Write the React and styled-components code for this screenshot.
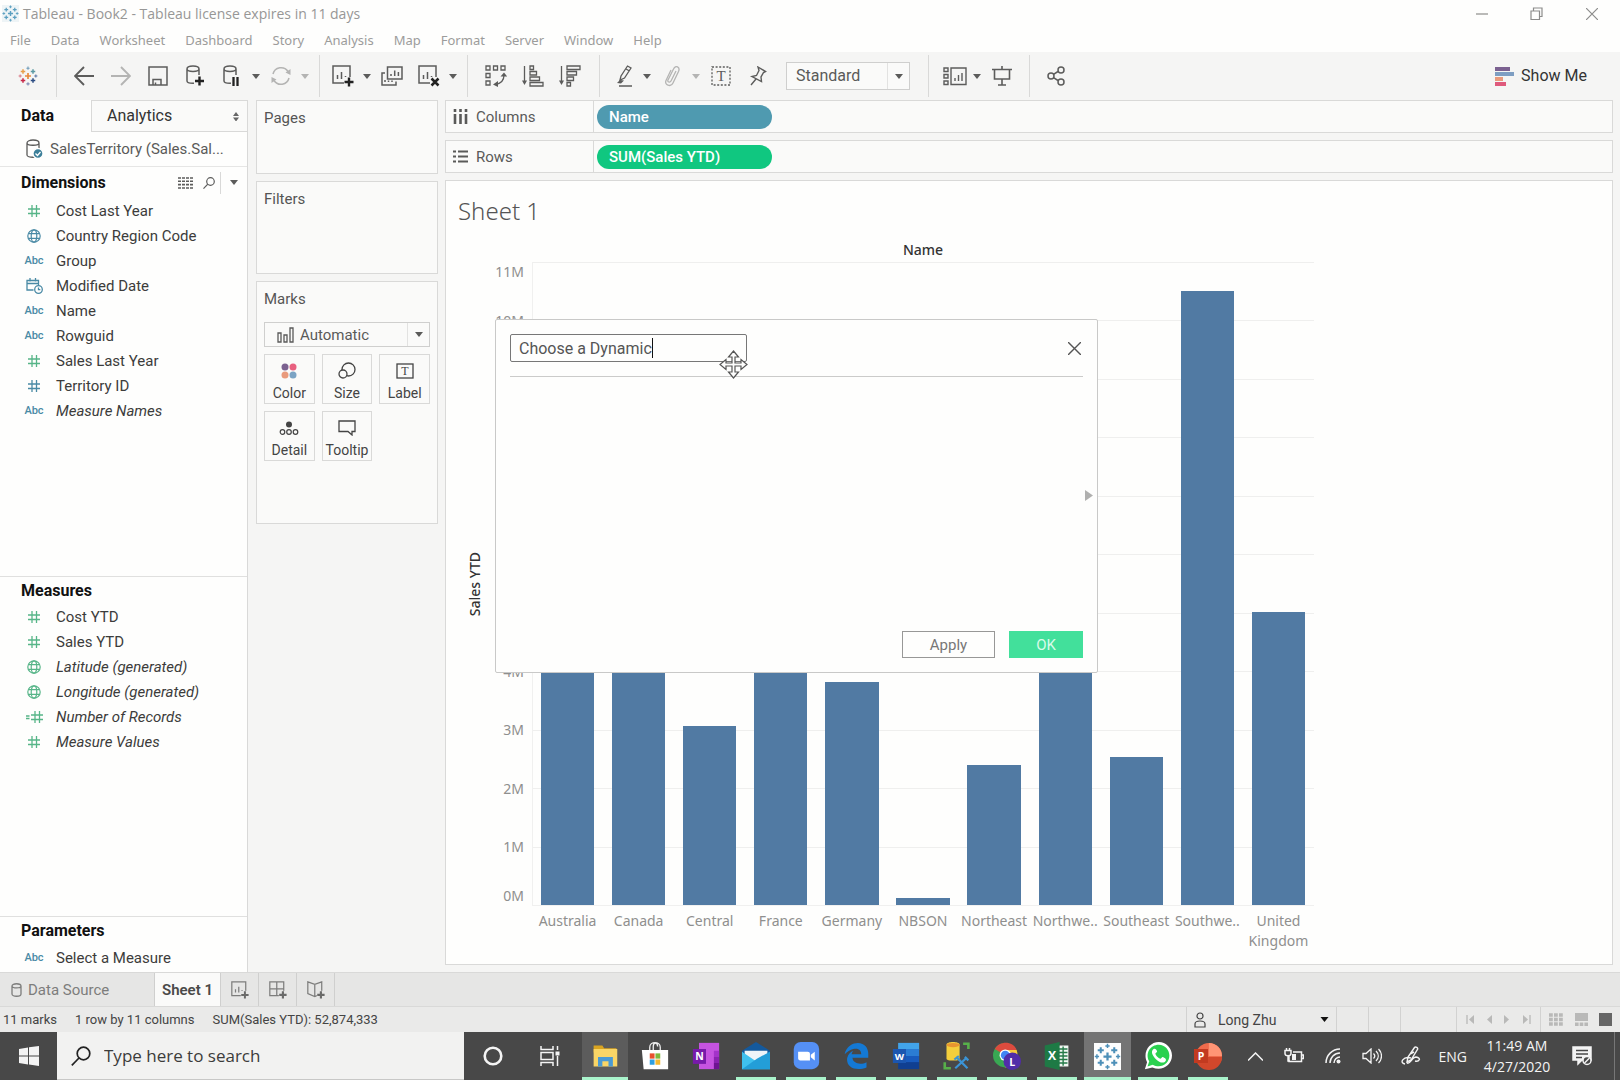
import React from "react";
import styled, { createGlobalStyle, css } from "styled-components";

const ui = `Roboto, "Liberation Sans", sans-serif`;
const wide = `"Noto Sans", "Open Sans", sans-serif`;
const line = "#d9d9d8";

const GlobalStyle = createGlobalStyle`
  *, *::before, *::after { box-sizing: border-box; }
  body { margin: 0; font-family: ${ui}; font-size: 15px; line-height: 20px; color: #333; background: #f5f5f4; }
  h1, h2, h3, ul, p { margin: 0; padding: 0; font-weight: 400; }
  ul { list-style: none; }
  button, input, select { font: inherit; color: inherit; margin: 0; }
  svg { display: block; flex: none; }
`;

const App_ = styled.div`
  display: flex;
  flex-direction: column;
  min-height: 100vh;
`;

const plainButton = css`
  border: 0;
  padding: 0;
  background: none;
  cursor: pointer;
`;

/* ---------- title and menu ---------- */
const TitleBar = styled.header`
  display: flex;
  align-items: center;
  height: 28px;
  padding: 0 20px 1px 2px;
  background: #fefefd;
  color: #979796;
`;
const Title = styled.h1`
  flex: 1;
  padding-left: 4px;
  font: 14px/20px "Open Sans", ${wide};
`;
const WindowButtons = styled.div`
  display: flex;
  gap: 38px;
`;
const WindowButton = styled.button`
  ${plainButton}
  display: grid;
  place-items: center;
  width: 17px;
  height: 17px;
  color: #8c8c8b;
`;
const MenuBar = styled.nav`
  display: flex;
  gap: 20px;
  height: 24px;
  padding: 0 10px;
  background: #fefefd;
`;
const MenuItem = styled.button`
  ${plainButton}
  color: #9c9c9b;
  font: 13px/20px ${wide};
`;

/* ---------- toolbar ---------- */
const Toolbar = styled.div`
  display: flex;
  align-items: center;
  height: 48px;
  background: #f5f5f4;
`;
const ToolGroup = styled.div`
  display: flex;
  align-items: center;
  height: 42px;
  padding: 0 ${(p) => p.$right ?? 8}px 0 ${(p) => p.$left ?? 8}px;
  border-right: ${(p) => (p.$last ? "0" : `1px solid ${line}`)};
`;
const Tool = styled.button`
  ${plainButton}
  display: grid;
  place-items: center;
  width: ${(p) => (p.$narrow ? 32 : 37)}px;
  height: 32px;
  color: ${(p) => (p.$dim ? "#b4b4b3" : "#5c5c5b")};
`;
const DropArrow = styled.button`
  ${plainButton}
  display: grid;
  place-items: center;
  width: 12px;
  height: 32px;
  color: ${(p) => (p.$dim ? "#b4b4b3" : "#5c5c5b")};
`;
const SelectBox = styled.label`
  display: flex;
  align-items: center;
  height: ${(p) => p.$height}px;
  width: ${(p) => p.$width};
  margin-left: ${(p) => (p.$spaced ? 10 : 0)}px;
  border: 1px solid #cfcfce;
  background: #fafaf9;
  color: #5a5a59;
`;
const SelectInput = styled.select`
  flex: 1;
  min-width: 0;
  height: 100%;
  padding: 0 ${(p) => (p.$size > 15 ? 9 : 5)}px;
  border: 0;
  appearance: none;
  background: none;
  font-size: ${(p) => p.$size}px;
`;
const SelectArrow = styled.span`
  display: grid;
  place-items: center;
  width: 22px;
  height: 100%;
  border-left: 1px solid #e2e2e1;
  pointer-events: none;
`;
const ShowMe = styled.button`
  ${plainButton}
  display: flex;
  align-items: center;
  gap: 7px;
  margin-left: auto;
  padding-right: 33px;
  font-size: 16px;
`;

/* ---------- work area ---------- */
const Work = styled.main`
  display: flex;
  flex: 1;
  min-height: 0;
`;
const Sidebar = styled.aside`
  display: flex;
  flex-direction: column;
  width: 248px;
  flex: none;
  border-right: 1px solid ${line};
  background: #fefefd;
`;
const SideTabs = styled.div`
  display: flex;
  height: 32px;
`;
const SideTab = styled.button`
  ${plainButton}
  display: flex;
  align-items: center;
  justify-content: space-between;
  flex: ${(p) => (p.$active ? "0 0 91px" : 1)};
  padding: 0 8px 0 ${(p) => (p.$active ? 21 : 15)}px;
  border: solid ${line};
  border-width: ${(p) => (p.$active ? "0" : "1px 0 1px 1px")};
  background: ${(p) => (p.$active ? "#fefefd" : "#fafaf9")};
  color: ${(p) => (p.$active ? "#111" : "#333")};
  font-size: 16px;
  font-weight: ${(p) => (p.$active ? 700 : 400)};
`;
const DataSourceRow = styled.div`
  display: flex;
  align-items: center;
  gap: 6px;
  height: 35px;
  padding-left: 26px;
  border-bottom: 1px solid #e6e6e5;
  color: #5a5a59;
`;
const FieldSection = styled.section`
  flex: ${(p) => p.$grow ?? "none"};
  min-height: 0;
  padding-bottom: 2px;
  border-top: ${(p) => (p.$ruled ? "1px solid #e0e0df" : "0")};
`;
const SectionHead = styled.div`
  display: flex;
  align-items: center;
  height: ${(p) => (p.$tall ? 31 : 28)}px;
  padding: 0 0 0 21px;
`;
const SectionTitle = styled.h2`
  flex: 1;
  color: #111;
  font-size: 16px;
  font-weight: 700;
`;
const HeadButton = styled.button`
  ${plainButton}
  display: grid;
  place-items: center;
  width: ${(p) => (p.$wide ? 27 : 23)}px;
  height: 22px;
  border-left: ${(p) => (p.$wide ? `1px solid ${line}` : "0")};
  color: #5c5c5b;
`;
const Field = styled.li`
  display: grid;
  grid-template-columns: 22px 1fr;
  align-items: center;
  column-gap: 11px;
  height: 25px;
  padding-left: 23px;
  color: #3c3c3b;
  font-style: ${(p) => (p.$italic ? "italic" : "normal")};
`;
const FieldMark = styled.span`
  display: grid;
  place-items: center;
  color: ${(p) => (p.$measure ? "#57b588" : "#4a8aa5")};
  font: 500 11px/14px ${ui};
`;

const Cards = styled.div`
  display: flex;
  flex-direction: column;
  gap: 7px;
  width: 182px;
  flex: none;
  margin-left: 8px;
`;
const Card = styled.section`
  height: ${(p) => p.$height}px;
  padding: 7px 7px;
  border: 1px solid ${line};
  background: #fafaf9;
`;
const CardTitle = styled.h2`
  color: #555;
  font-size: 15px;
`;
const MarksBody = styled.div`
  display: flex;
  flex-direction: column;
  gap: 7px;
  padding-top: 13px;
`;
const MarkGrid = styled.div`
  display: grid;
  grid-template-columns: repeat(3, 1fr);
  gap: 7px;
`;
const MarkButton = styled.button`
  ${plainButton}
  display: flex;
  flex-direction: column;
  align-items: center;
  justify-content: flex-end;
  gap: 4px;
  height: 50px;
  border: 1px solid ${line};
  color: #444;
  font-size: 14px;
`;

const Canvas = styled.div`
  display: flex;
  flex-direction: column;
  flex: 1;
  min-width: 0;
  gap: 7px;
  padding: 0 7px;
  padding-bottom: 7px;
`;
const Shelf = styled.section`
  display: flex;
  align-items: center;
  height: 33px;
  border: 1px solid ${line};
  background: #fafaf9;
`;
const ShelfTitle = styled.h2`
  display: flex;
  align-items: center;
  gap: 8px;
  width: 148px;
  height: 100%;
  padding-left: 7px;
  border-right: 1px solid ${line};
  color: #5a5a59;
  font-size: 15px;
`;
const Pill = styled.button`
  ${plainButton}
  width: 175px;
  height: 24px;
  margin-left: 3px;
  padding: 0 12px;
  border-radius: 12px;
  background: ${(p) => (p.$measure ? "#10c780" : "#4f9ab0")};
  color: #fff;
  font-size: 15px;
  font-weight: 500;
  text-align: left;
`;
const Sheet = styled.section`
  position: relative;
  flex: 1;
  padding: 14px 12px 0;
  border: 1px solid ${line};
  background: #fefefd;
`;
const SheetTitle = styled.h2`
  color: #555;
  font: 300 24px/32px ${wide};
`;
const Chart = styled.div`
  display: grid;
  grid-template-columns: 34px 32px 8px 782px;
  grid-template-rows: 35px 644px auto;
  color: #8f8f8e;
  font: 14px/20px ${wide};
`;
const ChartHead = styled.h3`
  grid-area: 1 / 4;
  align-self: center;
  padding-top: 10px;
  color: #333;
  font-size: 14px;
  font-weight: 500;
  text-align: center;
`;
const AxisTitle = styled.div`
  grid-area: 2 / 1;
  place-self: center;
  writing-mode: vertical-rl;
  transform: rotate(180deg);
  color: #333;
  font-weight: 500;
`;
const AxisLabels = styled.div`
  grid-area: 2 / 2;
  display: grid;
  grid-template-rows: 1fr repeat(10, 2fr) 1fr;
  align-items: center;
  text-align: right;
  & > :first-child { align-self: start; }
  & > :last-child { align-self: end; }
`;
const Lines = styled.div`
  grid-area: 2 / 4;
  display: grid;
  grid-template-rows: repeat(11, 1fr);
  border: solid #f0f0ef;
  border-width: 0 0 1px 1px;
`;
const Line = styled.div`
  border-top: 1px solid #efefee;
`;
const Bars = styled.div`
  grid-area: 2 / 4;
  display: grid;
  grid-template-columns: repeat(11, 1fr);
  align-items: end;
  padding-bottom: 1px;
`;
const Bar = styled.div`
  justify-self: center;
  width: 75%;
  background: #517aa3;
`;
const BarLabels = styled.div`
  grid-area: 3 / 4;
  display: grid;
  grid-template-columns: repeat(11, 1fr);
  padding-top: 5px;
  text-align: center;
`;
const BarLabel = styled.span`
  display: flex;
  justify-content: center;
`;

/* ---------- floating editor ---------- */
const Dialog = styled.div`
  position: absolute;
  left: 49px;
  top: 138px;
  display: flex;
  flex-direction: column;
  width: 603px;
  height: 354px;
  padding: 14px;
  border: 1px solid #c9c9c8;
  border-radius: 2px;
  background: #fefefd;
`;
const DialogHead = styled.div`
  display: flex;
  align-items: center;
  justify-content: space-between;
  padding-bottom: 14px;
  border-bottom: 1px solid #cbcbca;
`;
const NameBox = styled.label`
  display: flex;
  align-items: center;
  width: 237px;
  height: 28px;
  padding-left: 8px;
  border: 1px solid #777;
  border-radius: 2px;
`;
const NameInput = styled.input`
  field-sizing: content;
  padding: 1px 0 0;
  border: 0;
  outline: 0;
  background: none;
  color: #555;
  font-size: 16px;
`;
const TextCaret = styled.span`
  width: 1px;
  height: 20px;
  background: #111;
`;
const Expand = styled.button`
  ${plainButton}
  flex: 1;
  align-self: flex-end;
  margin-right: -10px;
  padding-bottom: 18px;
  color: #b0b0af;
`;
const DialogFoot = styled.div`
  display: flex;
  justify-content: flex-end;
  gap: 14px;
`;
const DialogButton = styled.button`
  ${plainButton}
  width: ${(p) => (p.$primary ? 74 : 93)}px;
  height: 27px;
  border: 1px solid ${(p) => (p.$primary ? "#42e09b" : "#989897")};
  background: ${(p) => (p.$primary ? "#42e09b" : "transparent")};
  color: ${(p) => (p.$primary ? "#d9fbea" : "#777")};
  font-size: 15px;
`;
const MovePointer = styled.div`
  position: absolute;
  left: 223px;
  top: 30px;
`;

/* ---------- sheet tabs and status ---------- */
const TabStrip = styled.nav`
  display: flex;
  height: 35px;
  border-top: 1px solid ${line};
  border-bottom: 1px solid ${line};
  background: #e6e6e5;
`;
const SheetTab = styled.button`
  ${plainButton}
  display: flex;
  align-items: center;
  justify-content: ${(p) => (p.$source ? "flex-start" : "center")};
  gap: 6px;
  width: ${(p) => (p.$source ? 155 : p.$active ? 66 : 38)}px;
  padding-left: ${(p) => (p.$source ? 11 : 0)}px;
  border-right: 1px solid #cfcfce;
  background: ${(p) => (p.$active ? "#fafaf9" : "none")};
  color: ${(p) => (p.$active ? "#4a4a49" : "#7d7d7c")};
  font-weight: ${(p) => (p.$active ? 600 : 400)};
`;
const StatusBar = styled.footer`
  display: flex;
  align-items: center;
  gap: 18px;
  height: 25px;
  padding-left: 3px;
  background: #eaeae9;
  color: #444;
  font-size: 13px;
`;
const StatusRight = styled.div`
  display: flex;
  align-items: stretch;
  height: 25px;
  margin-left: auto;
`;
const StatusCell = styled.div`
  display: flex;
  align-items: center;
  justify-content: space-between;
  width: ${(p) => p.$width}px;
  padding: 0 ${(p) => p.$pad ?? 0}px;
  border-left: 1px solid #d2d2d1;
`;
const UserButton = styled.button`
  ${plainButton}
  display: flex;
  align-items: center;
  flex: 1;
  gap: 12px;
  color: #444;
  font-size: 14px;
  & > :last-child { margin-left: auto; color: #111; }
`;
const TinyButton = styled.button`
  ${plainButton}
  color: ${(p) => (p.$active ? "#666" : "#b9b9b8")};
`;

/* ---------- taskbar ---------- */
const Taskbar = styled.footer`
  display: flex;
  height: 48px;
  background: #484848;
  color: #f4f4f4;
`;
const StartButton = styled.button`
  ${plainButton}
  display: grid;
  place-items: center;
  width: 57px;
  color: #f4f4f4;
`;
const Search = styled.label`
  display: flex;
  align-items: center;
  gap: 13px;
  width: 407px;
  padding-left: 14px;
  border-bottom: 1px solid #c8c8c7;
  background: #f2f2f1;
  color: #222;
`;
const SearchInput = styled.input`
  flex: 1;
  min-width: 0;
  padding: 0;
  border: 0;
  outline: 0;
  background: none;
  font: 17px/24px "Open Sans", ${wide};
  &::placeholder { color: #3c3c3b; opacity: 1; }
`;
const TaskButton = styled.button`
  ${plainButton}
  display: grid;
  place-items: center;
  width: 57px;
  color: #f4f4f4;
`;
const Apps = styled.div`
  display: grid;
  grid-template-columns: repeat(13, 1fr);
  width: 653px;
  margin-left: 2px;
`;
const AppButton = styled.button`
  ${plainButton}
  display: grid;
  place-items: center;
  margin: 0 ${(p) => (p.$lit ? 2 : 5)}px;
  padding-top: 3px;
  border-bottom: 3px solid ${(p) => (p.$open ? "#a9f3cb" : "transparent")};
  background: ${(p) => (p.$lit === 2 ? "#747474" : p.$lit ? "#5c5c5c" : "none")};
  background-clip: padding-box;
`;
const Tray = styled.div`
  display: flex;
  align-items: center;
  flex: 1;
  justify-content: space-between;
  padding: 0 5px 0 11px;
  font: 14px/21px "Open Sans", ${wide};
`;
const TrayButton = styled.button`
  ${plainButton}
  display: grid;
  place-items: center;
  min-width: ${(p) => (p.$wide ? 30 : 22)}px;
  height: 44px;
  color: #f4f4f4;
  text-align: center;
`;
const DesktopEdge = styled.span`
  width: 1px;
  height: 48px;
  background: #777;
`;

/* ---------- icons ---------- */
const Svg = ({ w = 22, h, box, children, ...rest }) => (
  <svg width={w} height={h ?? w} viewBox={box ?? `0 0 ${w} ${h ?? w}`} fill="none" stroke="currentColor" strokeWidth="1.5" aria-hidden="true" {...rest}>
    {children}
  </svg>
);
const Down = ({ w = 8 }) => (
  <Svg w={w} h={5} box="0 0 8 5"><path d="M0 0h8L4 5z" fill="currentColor" stroke="none" /></Svg>
);
const plus = (x, y, r) => `M${x - r} ${y}h${2 * r}M${x} ${y - r}v${2 * r}`;
const Sparkle = ({ w = 20, mono, paper }) => {
  const c = (v) => mono ?? v;
  return (
    <Svg w={w} box="0 0 24 24" strokeWidth="1.8">
      {paper && <path d="M0 0h24v24H0z" fill={paper} stroke="none" />}
      <path d={plus(12, 12, 3.6)} stroke={c("#e8893c")} strokeWidth="2" />
      <path d={plus(6, 6.5, 2.7)} stroke={c("#e8a04c")} />
      <path d={plus(18, 6.5, 2.7)} stroke={c("#5d9aa3")} />
      <path d={plus(6, 17.5, 2.7)} stroke={c("#c72a4a")} />
      <path d={plus(18, 17.5, 2.7)} stroke={c("#2c4c82")} />
      <path d={plus(12, 2.6, 1.9)} stroke={c("#6f9bb8")} strokeWidth="1.3" />
      <path d={plus(12, 21.4, 1.9)} stroke={c("#7f8cb5")} strokeWidth="1.3" />
      <path d={plus(2.6, 12, 1.9)} stroke={c("#d97a86")} strokeWidth="1.3" />
      <path d={plus(21.4, 12, 1.9)} stroke={c("#5b79a8")} strokeWidth="1.3" />
    </Svg>
  );
};
const Arrow = ({ flip }) => (
  <Svg w={20} strokeWidth="1.9"><path d={flip ? "M0 10h19M10 1l9 9-9 9" : "M20 10H1M10 1l-9 9 9 9"} /></Svg>
);
const Save = () => (
  <Svg w={20} strokeWidth="1.5"><path d="M1 1h18v18H1zM5 19v-5.500h8V19M7.500 16.500v2" /></Svg>
);
const cylinder = "M3 4c0-4 12-4 12 0v12c0 3-12 3-12 0zM3 4c0 3.200 12 3.200 12 0";
const AddSource = () => (
  <Svg w={22}><path d={cylinder} /><path d="M10 10h12v12H10z" fill="#f5f5f4" stroke="none" /><path d={plus(15.5, 16, 4.5)} stroke="#222" strokeWidth="2.4" /></Svg>
);
const PauseSource = () => (
  <Svg w={22}><path d={cylinder} /><path d="M10 10h12v12H10z" fill="#f5f5f4" stroke="none" /><path d="M12.500 12v9M16.500 12v9" stroke="#222" strokeWidth="2.300" /></Svg>
);
const Refresh = () => (
  <Svg w={20}><path d="M2 8a8.300 8.300 0 0 1 15-2.500M18 12a8.300 8.300 0 0 1-15 2.500" /><path d="M19.500 3v6l-5-2.500zM.500 17v-6l5 2.500z" fill="currentColor" stroke="none" /></Svg>
);
const bars = "M5.500 14v-4M9.500 14V7M13.500 14v-3";
const NewSheet = ({ bold = "#222", w = 22, bg = "#f5f5f4" }) => (
  <Svg w={w} box="0 0 22 22"><path d="M1 1h17v17H1z" /><path d={bars} /><path d="M12 12h10v10H12z" fill={bg} stroke="none" /><path d={plus(17, 17, 4.5)} stroke={bold} strokeWidth="2.4" /></Svg>
);
const Duplicate = () => (
  <Svg w={22} h={20}><path d="M6.500 1H21v12H6.500zM10 10V8M13.700 10V4.500M17.400 10V6M4 7H1v12h14v-3.500M4 16v-2M7.500 16v-1.500M11 16v-1.500" /></Svg>
);
const ClearSheet = () => (
  <Svg w={22}><path d="M1 1h17v17H1z" /><path d={bars} /><path d="M12 12h10v10H12z" fill="#f5f5f4" stroke="none" /><path d="M13.500 13.500l7 7M20.500 13.500l-7 7" stroke="#222" strokeWidth="2.500" /></Svg>
);
const Swap = () => (
  <Svg w={22}><path d="M1 1h4v4H1zM8.500 1h4v4h-4zM16 1h4v4h-4zM1 8.500h4v4H1zM1 16h4v4H1zM19 10c0 5-3 8.500-8.500 9.500" strokeWidth="1.300" /><path d="M15.500 11.500l3.500-4 3.300 4zM13 16l-5 3.500 5 2.500z" fill="currentColor" stroke="none" /></Svg>
);
const SortRows = ({ desc }) => (
  <Svg w={22} strokeWidth="1.300"><path d="M2.500 1v17" /><path d="M0 15.500h5L2.500 20z" fill="currentColor" stroke="none" />
    {desc ? <path d="M8 1h13v3.500H8zM8 6.500h9.500V10H8zM8 12h6.500v3.500H8zM8 17.500h3.500V21H8z" /> : <path d="M8 1h3.500v3.500H8zM8 6.500h6.500V10H8zM8 12h9.500v3.500H8zM8 17.500h13V21H8z" />}
  </Svg>
);
const Pen = () => (
  <Svg w={18} h={22} strokeWidth="1.300"><path d="M4 15l1-4L11.500 1l3.500 2L8.500 13zM10 4l3.500 2M3 21h13" /><path d="M4 15l-3 3 4 .500 3-3z" fill="currentColor" stroke="none" /></Svg>
);
const Clip = () => (
  <Svg w={16} h={22} strokeWidth="1.3"><path d="M12 6L7 16c-1 2-4 1-3-1L9.500 4c2-4.500 7-2 5 2.500L9 18c-2 4.500-9 2-7-2.500L7 5" /></Svg>
);
const TextTool = ({ dashed }) => (
  <Svg w={dashed ? 20 : 18} h={dashed ? 20 : 16} strokeWidth="1.3">
    <rect x="1" y="1" width={dashed ? 18 : 16} height={dashed ? 18 : 14} strokeDasharray={dashed ? "2 1.600" : undefined} />
    <text x={dashed ? 10 : 9} y={dashed ? 15 : 12} textAnchor="middle" fontFamily="Liberation Serif, serif" fontSize={dashed ? 15 : 12} fill="currentColor" stroke="none">T</text>
  </Svg>
);
const Pin = () => (
  <Svg w={18} h={20} strokeWidth="1.4"><path d="M9 1l7.500 4.500-2 1-2.500 4.500.500 4.500L3 10.500l4.500-1L10 4.500zM7 13l-5 6" /></Svg>
);
const Cards_ = () => (
  <Svg w={24} h={19}><path d="M1 1h4v3.500H1zM1 7.500h4V11H1zM1 14h4v3.500H1zM8 1h15v16.500H8zM12 14v-3M15.500 14V8M19 14V6" strokeWidth="1.400" /></Svg>
);
const Present = () => (
  <Svg w={20}><path d="M0 3.500h20M2.500 4v9h15V4M10 13v6M6 19h8M10 0v3" strokeWidth="1.6" /></Svg>
);
const Share = () => (
  <Svg w={19} h={20}><circle cx="4" cy="10" r="3" /><circle cx="14" cy="4" r="3" /><circle cx="14" cy="16" r="3" /><path d="M6.500 8.300l4.500-2.800M6.500 11.700l4.500 2.800" /></Svg>
);
const Hash = () => (
  <Svg w={12} strokeWidth="1.3"><path d="M4 0v12M8.500 0v12M0 4h12M0 8.500h12" /></Svg>
);
const CalcHash = () => (
  <Svg w={17} h={12} strokeWidth="1.300"><path d="M9 0v12M13.500 0v12M5 4h12M5 8.500h12M0 5h3.500M0 7.500h3.500" /></Svg>
);
const Globe = () => (
  <Svg w={14} strokeWidth="1.2"><circle cx="7" cy="7" r="6.200" /><ellipse cx="7" cy="7" rx="2.800" ry="6.200" /><path d="M1.500 4.700h11M1.500 9.300h11" /></Svg>
);
const DateTime = () => (
  <Svg w={17} h={16} strokeWidth="1.300"><path d="M7.500 12H1V2.500h11.500V7M1 5.500h11.500M4 0v3.500M9.500 0v3.500" /><circle cx="12.500" cy="11.500" r="3.800" /><path d="M12.500 9.500v2.200h1.800" /></Svg>
);
const Lens = ({ w = 12 }) => (
  <Svg w={w} box="0 0 20 20" strokeWidth={w > 15 ? 1.7 : 2}><circle cx="12.500" cy="7.500" r="6.300" /><path d="M8 12L.800 19.300" /></Svg>
);

const kinds = {
  num: <Hash />,
  calc: <CalcHash />,
  geo: <Globe />,
  date: <DateTime />,
  text: "Abc",
};
const FieldRow = ({ kind, measure, italic, children }) => (
  <Field $italic={italic}>
    <FieldMark $measure={measure}>{kinds[kind]}</FieldMark>
    {children}
  </Field>
);

const dimensions = [
  ["num", "Cost Last Year", true],
  ["geo", "Country Region Code"],
  ["text", "Group"],
  ["date", "Modified Date"],
  ["text", "Name"],
  ["text", "Rowguid"],
  ["num", "Sales Last Year", true],
  ["num", "Territory ID"],
  ["text", "Measure Names", false, true],
];
const measures = [
  ["num", "Cost YTD"],
  ["num", "Sales YTD"],
  ["geo", "Latitude (generated)", true],
  ["geo", "Longitude (generated)", true],
  ["calc", "Number of Records", true],
  ["num", "Measure Values", true],
];
const sales = [
  ["Australia", 5.98],
  ["Canada", 6.77],
  ["Central", 3.07],
  ["France", 4.77],
  ["Germany", 3.81],
  ["NBSON", 0.12],
  ["Northeast", 2.4],
  ["Northwe..", 7.89],
  ["Southeast", 2.53],
  ["Southwe..", 10.51],
  ["United Kingdom", 5.01],
];
const menus = ["File", "Data", "Worksheet", "Dashboard", "Story", "Analysis", "Map", "Format", "Server", "Window", "Help"];

/* taskbar program icons, all on a 32 unit square */
const Program = ({ children }) => (
  <svg width="28" height="28" viewBox="0 0 32 32" aria-hidden="true">{children}</svg>
);
const Letter = ({ x, y, s = 12, children }) => (
  <text x={x} y={y} fontSize={s} fontWeight="700" fontFamily="Open Sans, sans-serif" fill="#fff" textAnchor="middle">{children}</text>
);
const programs = [
  ["File Explorer", true, 1, <Program key="i"><path d="M3 4h10l2 3h14v5H3z" fill="#d9a421" /><path d="M3 8h27v20H3z" fill="#f9d566" /><path d="M8 28V17h17v11h-5v-6h-7v6z" fill="#4a9ad4" /></Program>],
  ["Microsoft Store", false, 0, <Program key="i"><path d="M10 10V6c0-7 12-7 12 0v4M14 10V5c0-5 5-5 5 0" fill="none" stroke="#eee" strokeWidth="1.500" /><path d="M1 9h30v22H3z" fill="#fff" /><path d="M10 13h5.500v6H10z" fill="#e8502e" /><path d="M16.500 13H22v6h-5.500z" fill="#80b83c" /><path d="M10 20h5.500v6H10z" fill="#2f9fe0" /><path d="M16.500 20H22v6h-5.500z" fill="#f5b82e" /></Program>],
  ["OneNote", false, 0, <Program key="i"><path d="M8 1h23v30H8z" fill="#c553e0" /><path d="M25 10h6v7h-6z" fill="#a333c9" /><path d="M25 17h6v7h-6z" fill="#8a22b0" /><path d="M25 24h6v7h-6z" fill="#6e1492" /><path d="M1 8h15v17H1z" fill="#7719aa" /><Letter x={8.5} y={21}>N</Letter></Program>],
  ["Mail", true, 0, <Program key="i"><path d="M0 10L16 0l16 10v5H0z" fill="#14599c" /><path d="M3 10h26v14H3z" fill="#eef4f8" /><path d="M0 11l16 11L32 11v20H0z" fill="#3fc0ee" /><path d="M0 31l17-12L32 11v20z" fill="#239ed8" /></Program>],
  ["Zoom", true, 0, <Program key="i"><rect x="2" y="0" width="29" height="31" rx="8" fill="#5590f5" /><path d="M7 11h11c1.500 0 2.500 1 2.500 2.500V21h-11C8 21 7 20 7 18.500zM21.500 14.500L26 11v10l-4.500-3.500z" fill="#fff" /></Program>],
  ["Edge", true, 0, <Program key="i"><path d="M3 14C5 4 13 1 18 1c8 0 12 6 12 12v5H12c0 6 9 9 16 5v6C16 34 4 29 6 18c1-4 4-7 7-8-1 1-2 3-2 4h11c0-6-5-7-9-6-4 1-7 3-10 6z" fill="#1479d4" /></Program>],
  ["Word", true, 0, <Program key="i"><path d="M7 1h24v8H7z" fill="#42a4ea" /><path d="M7 8h24v8H7z" fill="#2b7cd3" /><path d="M7 16h24v8H7z" fill="#185abd" /><path d="M7 23h24v8H7z" fill="#103f91" /><path d="M1 8h15v16H1z" fill="#1b56b0" /><Letter x={8.5} y={20.5} s={11}>W</Letter></Program>],
  ["SQL Server Tools", true, 0, <Program key="i"><path d="M4 3c0-4 15-4 15 0v16c0 3-15 3-15 0z" fill="#f4cf3c" /><ellipse cx="11.500" cy="3.500" rx="7.500" ry="2.500" fill="#e89530" /><path d="M23 2h6v6M2 23v7h7" fill="none" stroke="#57b04a" strokeWidth="3" /><path d="M14 30l13-12M15 17l13 13M13 20l5-4M25 17l4 4" stroke="#3b94d6" strokeWidth="2.500" /></Program>],
  ["Chrome", true, 0, <Program key="i"><circle cx="14" cy="15" r="14" fill="#39a853" /><path d="M14 15L2 8C8-2 23-1 27 9z" fill="#dd4b3e" /><path d="M14 9h13c4 12-5 20-13 20l6-12z" fill="#f8cb3a" /><circle cx="14" cy="15" r="6.500" fill="#fff" /><circle cx="14" cy="15" r="5" fill="#4285f4" /><circle cx="22" cy="22" r="10" fill="#512da8" /><Letter x={22} y={27}>L</Letter></Program>],
  ["Excel", true, 0, <Program key="i"><path d="M16 4h13v24H16z" fill="#f2f7f3" /><path d="M18 8h10M18 12h10M18 16h10M18 20h10M18 24h10M23 5v22" stroke="#257a48" strokeWidth="1.600" /><path d="M2 4l17-4v32L2 28z" fill="#1e7a45" /><Letter x={10.5} y={21} s={14}>X</Letter></Program>],
  ["Tableau", true, 2, <Sparkle key="i" w={27} mono="#4c8fb8" paper="#fdfdfd" />],
  ["WhatsApp", true, 0, <Program key="i"><path d="M1 31l2.500-8C-2 12 6 0 17 0c8 0 15 7 15 15.500C32 27 20 34 9.500 29z" fill="#fff" /><path d="M4 28l2-6C1 13 7 3 17 3c7 0 12 6 12 12.500C29 25 19 31 10 26z" fill="#2ad14f" /><path d="M11 8c-4 3-1 8 3 12s9 5 11 1c1-2-3-4-4-4l-2 2c-2 0-6-4-6-6l2-2c0-1-2-4-4-3z" fill="#fff" /></Program>],
  ["PowerPoint", true, 0, <Program key="i"><circle cx="17" cy="16" r="15" fill="#ef6b4c" /><path d="M17 1a15 15 0 0 1 15 15H17z" fill="#ff9575" /><path d="M2 17h30a15 15 0 0 1-30 0z" fill="#d2472b" /><path d="M0 8h16v16H0z" fill="#c23a20" /><Letter x={8} y={20.5}>P</Letter></Program>],
];

export default function App() {
  return (
    <App_>
      <GlobalStyle />
      <TitleBar>
        <Sparkle w={17} mono="#5b9fc0" paper="#eef4f6" />
        <Title>Tableau - Book2 - Tableau license expires in 11 days</Title>
        <WindowButtons>
          <WindowButton aria-label="Minimize"><Svg w={12} strokeWidth="1.2"><path d="M0 6h12" /></Svg></WindowButton>
          <WindowButton aria-label="Restore"><Svg w={13} strokeWidth="1.2"><path d="M1 4h8.500v8.500H1zM3.500 4V1H12v8.500H9.500" /></Svg></WindowButton>
          <WindowButton aria-label="Close"><Svg w={12} strokeWidth="1.200"><path d="M0 0l12 12M12 0L0 12" /></Svg></WindowButton>
        </WindowButtons>
      </TitleBar>
      <MenuBar>{menus.map((m) => <MenuItem key={m}>{m}</MenuItem>)}</MenuBar>

      <Toolbar>
        <ToolGroup $left={9} $right={10}><Tool aria-label="Start page"><Sparkle w={20} /></Tool></ToolGroup>
        <ToolGroup $left={8} $right={8}>
          <Tool aria-label="Undo"><Arrow /></Tool>
          <Tool aria-label="Redo" $dim><Arrow flip /></Tool>
          <Tool aria-label="Save"><Save /></Tool>
          <Tool aria-label="New data source"><AddSource /></Tool>
          <Tool aria-label="Pause auto updates"><PauseSource /></Tool>
          <DropArrow aria-label="Update options"><Down /></DropArrow>
          <Tool aria-label="Run update" $dim><Refresh /></Tool>
          <DropArrow aria-label="Run options" $dim><Down /></DropArrow>
        </ToolGroup>
        <ToolGroup $left={4} $right={8}>
          <Tool aria-label="New worksheet"><NewSheet /></Tool>
          <DropArrow aria-label="New options"><Down /></DropArrow>
          <Tool aria-label="Duplicate"><Duplicate /></Tool>
          <Tool aria-label="Clear sheet"><ClearSheet /></Tool>
          <DropArrow aria-label="Clear options"><Down /></DropArrow>
        </ToolGroup>
        <ToolGroup $left={9} $right={11}>
          <Tool aria-label="Swap rows and columns"><Swap /></Tool>
          <Tool aria-label="Sort ascending"><SortRows /></Tool>
          <Tool aria-label="Sort descending"><SortRows desc /></Tool>
        </ToolGroup>
        <ToolGroup $left={9} $right={18}>
          <Tool aria-label="Highlight" $narrow><Pen /></Tool>
          <DropArrow aria-label="Highlight options"><Down /></DropArrow>
          <Tool aria-label="Group members" $dim><Clip /></Tool>
          <DropArrow aria-label="Group options" $dim><Down /></DropArrow>
          <Tool aria-label="Show mark labels"><TextTool dashed /></Tool>
          <Tool aria-label="Fix axes"><Pin /></Tool>
          <SelectBox $height={28} $width="124px" $spaced>
            <SelectInput aria-label="Fit" $size={16} defaultValue="Standard"><option>Standard</option></SelectInput>
            <SelectArrow><Down /></SelectArrow>
          </SelectBox>
        </ToolGroup>
        <ToolGroup $left={10} $right={9}>
          <Tool aria-label="Show or hide cards" $narrow><Cards_ /></Tool>
          <DropArrow aria-label="Card options"><Down /></DropArrow>
          <Tool aria-label="Presentation mode"><Present /></Tool>
        </ToolGroup>
        <ToolGroup $last><Tool aria-label="Share"><Share /></Tool></ToolGroup>
        <ShowMe>
          <Svg w={19} h={19} stroke="none"><path d="M0 0h15v4H0z" fill="#7b6190" /><path d="M0 5h19v4H0z" fill="#7e9ec2" /><path d="M0 10h8v4H0z" fill="#e99a7c" /><path d="M0 15h11v4H0z" fill="#df5a7c" /></Svg>
          Show Me
        </ShowMe>
      </Toolbar>

      <Work>
        <Sidebar>
          <SideTabs>
            <SideTab $active>Data</SideTab>
            <SideTab>Analytics<Svg w={6} h={9} stroke="none"><path d="M0 4h6L3 0zM0 5.500h6l-3 4z" fill="#666" /></Svg></SideTab>
          </SideTabs>
          <DataSourceRow>
            <Svg w={18} h={20} strokeWidth="1.3"><path d="M1 4c0-4 12-4 12 0v12c0 3-12 3-12 0zM1 4c0 3 12 3 12 0" /><circle cx="12" cy="14.500" r="5" fill="#3c7f99" stroke="#fefefd" /><path d="M9.500 14.500l2 2 3-3.500" stroke="#fff" /></Svg>
            SalesTerritory (Sales.Sal...
          </DataSourceRow>
          <FieldSection $grow="410 1 0">
            <SectionHead $tall>
              <SectionTitle>Dimensions</SectionTitle>
              <HeadButton aria-label="View data"><Svg w={15} h={12} strokeWidth="1.6" strokeDasharray="3 1"><path d="M0 1h15M0 4.300h15M0 7.600h15M0 11h15" /></Svg></HeadButton>
              <HeadButton aria-label="Find field"><Lens /></HeadButton>
              <HeadButton aria-label="Dimension options" $wide><Down /></HeadButton>
            </SectionHead>
            <ul>{dimensions.map(([k, t, m, i]) => <FieldRow key={t} kind={k} measure={m} italic={i}>{t}</FieldRow>)}</ul>
          </FieldSection>
          <FieldSection $grow="340 1 0" $ruled>
            <SectionHead><SectionTitle>Measures</SectionTitle></SectionHead>
            <ul>{measures.map(([k, t, i]) => <FieldRow key={t} kind={k} measure italic={i}>{t}</FieldRow>)}</ul>
          </FieldSection>
          <FieldSection $ruled>
            <SectionHead><SectionTitle>Parameters</SectionTitle></SectionHead>
            <ul><FieldRow kind="text">Select a Measure</FieldRow></ul>
          </FieldSection>
        </Sidebar>

        <Cards>
          <Card $height={74}><CardTitle>Pages</CardTitle></Card>
          <Card $height={93}><CardTitle>Filters</CardTitle></Card>
          <Card $height={243}>
            <CardTitle>Marks</CardTitle>
            <MarksBody>
              <SelectBox $height={25} $width="100%">
                <Svg w={30} h={16} strokeWidth="1.3"><path d="M13 6h3v9h-3zM19 8h3v7h-3zM25 1h3v14h-3z" /></Svg>
                <SelectInput aria-label="Mark type" $size={15} defaultValue="Automatic"><option>Automatic</option></SelectInput>
                <SelectArrow><Down /></SelectArrow>
              </SelectBox>
              <MarkGrid>
                <MarkButton><Svg w={16} stroke="none"><circle cx="4" cy="4" r="3.500" fill="#7b6190" /><circle cx="12" cy="4" r="3.500" fill="#e8607f" /><circle cx="4" cy="12" r="3.500" fill="#e99a7c" /><circle cx="12" cy="12" r="3.500" fill="#7ba3c4" /></Svg>Color</MarkButton>
                <MarkButton><Svg w={18} h={17} strokeWidth="1.3"><circle cx="10.500" cy="7.500" r="6.500" /><circle cx="5" cy="12" r="4" fill="#fafaf9" /></Svg>Size</MarkButton>
                <MarkButton><TextTool />Label</MarkButton>
                <MarkButton><Svg w={20} h={15} strokeWidth="1.200"><circle cx="10" cy="3.500" r="3" fill="currentColor" stroke="none" /><circle cx="3.500" cy="11" r="2.300" /><circle cx="10" cy="11" r="2.300" /><circle cx="16.500" cy="11" r="2.300" /></Svg>Detail</MarkButton>
                <MarkButton><Svg w={18} h={16} strokeWidth="1.300"><path d="M1 1h16v10.500h-3V15l-4-3.500H1z" /></Svg>Tooltip</MarkButton>
              </MarkGrid>
            </MarksBody>
          </Card>
        </Cards>

        <Canvas>
          <Shelf>
            <ShelfTitle><Svg w={15} strokeWidth="2.600"><path d="M2 5v10M7.500 5v10M13 5v10M2 0v3M7.500 0v3M13 0v3" /></Svg>Columns</ShelfTitle>
            <Pill>Name</Pill>
          </Shelf>
          <Shelf>
            <ShelfTitle><Svg w={15} h={13} strokeWidth="2.200"><path d="M0 1.500h3M5 1.500h10M0 6.500h3M5 6.500h10M0 11.500h3M5 11.500h10" /></Svg>Rows</ShelfTitle>
            <Pill $measure>SUM(Sales YTD)</Pill>
          </Shelf>
          <Sheet>
            <SheetTitle>Sheet 1</SheetTitle>
            <Chart>
              <ChartHead>Name</ChartHead>
              <AxisTitle>Sales YTD</AxisTitle>
              <AxisLabels>{Array.from({ length: 12 }, (_, i) => <span key={i}>{11 - i}M</span>)}</AxisLabels>
              <Lines>{Array.from({ length: 11 }, (_, i) => <Line key={i} />)}</Lines>
              <Bars>{sales.map(([n, v]) => <Bar key={n} style={{ height: `${(v / 11) * 100}%` }} />)}</Bars>
              <BarLabels>{sales.map(([n]) => <BarLabel key={n}>{n}</BarLabel>)}</BarLabels>
            </Chart>
            <Dialog role="dialog" aria-label="Calculation editor">
              <DialogHead>
                <NameBox><NameInput aria-label="Field name" defaultValue="Choose a Dynamic" /><TextCaret /></NameBox>
                <WindowButton aria-label="Close editor"><Svg w={13} strokeWidth="1.400" stroke="#555"><path d="M0 0l13 13M13 0L0 13" /></Svg></WindowButton>
              </DialogHead>
              <Expand aria-label="Expand help"><Svg w={8} h={11} stroke="none"><path d="M0 0l8 5.500L0 11z" fill="currentColor" /></Svg></Expand>
              <DialogFoot>
                <DialogButton>Apply</DialogButton>
                <DialogButton $primary>OK</DialogButton>
              </DialogFoot>
              <MovePointer>
                <Svg w={29} strokeWidth="1.200" stroke="#555"><path d="M14.500 1l5 6h-3.500v6h6V9.500l6 5-6 5V16h-6v6h3.500l-5 6-5-6H13v-6H7v3.500l-6-5 6-5V13h6V7H9.500z" fill="#fefefd" /></Svg>
              </MovePointer>
            </Dialog>
          </Sheet>
        </Canvas>
      </Work>

      <TabStrip>
        <SheetTab $source><Svg w={11} h={14} strokeWidth="1.300"><path d="M1 3c0-3 9-3 9 0v8c0 3-9 3-9 0zM1 3c0 2.500 9 2.500 9 0" /></Svg>Data Source</SheetTab>
        <SheetTab $active>Sheet 1</SheetTab>
        <SheetTab aria-label="New worksheet tab"><NewSheet w={18} bold="#6a6a69" bg="#e6e6e5" /></SheetTab>
        <SheetTab aria-label="New dashboard tab"><Svg w={18} box="0 0 22 22"><path d="M1 1h17v17H1zM9.500 1v17M1 9.500h17" /><path d="M12 12h10v10H12z" fill="#e6e6e5" stroke="none" /><path d={plus(17, 17, 4.5)} stroke="#6a6a69" strokeWidth="2.600" /></Svg></SheetTab>
        <SheetTab aria-label="New story tab"><Svg w={18} box="0 0 22 22"><path d="M1 1l8.500 3L18 1v14.500L9.500 19 1 15.500zM9.500 4v15" /><path d="M12 12h10v10H12z" fill="#e6e6e5" stroke="none" /><path d={plus(17, 17, 4.5)} stroke="#6a6a69" strokeWidth="2.600" /></Svg></SheetTab>
      </TabStrip>
      <StatusBar>
        <span>11 marks</span>
        <span>1 row by 11 columns</span>
        <span>SUM(Sales YTD): 52,874,333</span>
        <StatusRight>
          <StatusCell $width={150} $pad={7}>
            <UserButton>
              <Svg w={12} h={16} strokeWidth="1.200"><circle cx="6" cy="4" r="3" /><path d="M1 15v-3c0-4 10-4 10 0v3z" /></Svg>
              Long Zhu
              <Down w={9} />
            </UserButton>
          </StatusCell>
          <StatusCell $width={32} />
          <StatusCell $width={32} />
          <StatusCell $width={56} />
          <StatusCell $width={84} $pad={9}>
            <TinyButton aria-label="First"><Svg w={9} strokeWidth="1.300"><path d="M1 0v9" /><path d="M8 0v9L3 4.500z" fill="currentColor" stroke="none" /></Svg></TinyButton>
            <TinyButton aria-label="Previous"><Svg w={6} h={9} stroke="none"><path d="M5 0v9L0 4.500z" fill="currentColor" /></Svg></TinyButton>
            <TinyButton aria-label="Next"><Svg w={6} h={9} stroke="none"><path d="M0 0v9l5-4.500z" fill="currentColor" /></Svg></TinyButton>
            <TinyButton aria-label="Last"><Svg w={9} strokeWidth="1.300"><path d="M8 0v9" /><path d="M1 0v9l5-4.500z" fill="currentColor" stroke="none" /></Svg></TinyButton>
          </StatusCell>
          <StatusCell $width={80} $pad={8}>
            <TinyButton aria-label="Sheet sorter"><Svg w={14} h={13} strokeWidth="3.400" strokeDasharray="3.800 1.200"><path d="M0 2h14M0 6.500h14M0 11h14" /></Svg></TinyButton>
            <TinyButton aria-label="Filmstrip"><Svg w={13} stroke="none"><path d="M0 0h13v8H0zM0 9.500h3.600V13H0zM4.700 9.500h3.600V13H4.700zM9.400 9.500H13V13H9.400z" fill="currentColor" /></Svg></TinyButton>
            <TinyButton aria-label="Tabs" $active><Svg w={13} stroke="none"><path d="M0 0h13v13H0z" fill="currentColor" /></Svg></TinyButton>
          </StatusCell>
        </StatusRight>
      </StatusBar>

      <Taskbar>
        <StartButton aria-label="Start"><Svg w={20} stroke="none"><path d="M0 3l9-1.500v8H0zM10 1.300L20 0v9.500H10zM0 10.500h9v8L0 17zM10 10.500h10V20l-10-1.500z" fill="currentColor" /></Svg></StartButton>
        <Search><Lens w={20} /><SearchInput type="search" aria-label="Search" placeholder="Type here to search" /></Search>
        <TaskButton aria-label="Cortana"><Svg w={20} strokeWidth="2.600"><circle cx="10" cy="10" r="8.300" /></Svg></TaskButton>
        <TaskButton aria-label="Task view"><Svg w={20} strokeWidth="1.500"><path d="M1 0v3.500h12V0M1 6.500h12v7H1zM1 20v-3.500h12V20M17.500 0v4M17.500 10v10" /><path d="M15.500 5.500h4v4h-4z" fill="currentColor" stroke="none" /></Svg></TaskButton>
        <Apps>
          {programs.map(([name, open, lit, icon]) => <AppButton key={name} aria-label={name} $open={open} $lit={lit}>{icon}</AppButton>)}
        </Apps>
        <Tray>
          <TrayButton aria-label="Hidden icons"><Svg w={15} h={9}><path d="M0 8.500l7.500-7.500L15 8.500" /></Svg></TrayButton>
          <TrayButton aria-label="Battery"><Svg w={20} h={16} strokeWidth="1.500"><path d="M5 8v5.500h12.500V4H9M18 7h1.500v3.500H18M1 2.500h6v3C7 8.500 1 8.500 1 5.500zM2.500 0v2M5.500 0v2M4 8v5h2" /><path d="M8 6h4v6H8z" fill="currentColor" stroke="none" /></Svg></TrayButton>
          <TrayButton aria-label="Network"><Svg w={16}><path d="M1 15A14 14 0 0 1 15 1M5 15A10 10 0 0 1 15 5M9 15a6 6 0 0 1 6-6" /><circle cx="13.500" cy="13.500" r="2" fill="currentColor" stroke="none" /></Svg></TrayButton>
          <TrayButton aria-label="Volume"><Svg w={20} h={16} strokeWidth="1.300"><path d="M1 5.500h3L9 1v14l-5-4.500H1zM11.500 5.500c1.500 1.500 1.500 3.500 0 5M14 3c3 3 3 7 0 10M16.500 1c4 4 4 10 0 14" /></Svg></TrayButton>
          <TrayButton aria-label="Pen workspace"><Svg w={20} strokeWidth="1.400"><path d="M6 16l1-5 6.500-9.500c1-1.500 4 .500 3 2L10 14zM9 8l4-2M10 12c-8-2-12 5-6 6M6 17c3 2 5-6 9-6 6 1 3 5-1 4" /></Svg></TrayButton>
          <TrayButton>ENG</TrayButton>
          <TrayButton>11:49 AM<br />4/27/2020</TrayButton>
          <TrayButton aria-label="Notifications" $wide><Svg w={20} strokeWidth="1.500"><path d="M1 1h18v13H10l-4 4v-4H1z" fill="currentColor" /><path d="M4 4.500h12M4 8h12M4 11.500h6" stroke="#484848" /><circle cx="15" cy="14.500" r="4" fill="#484848" /><path d="M12.500 17l5-5" /></Svg></TrayButton>
          <DesktopEdge />
        </Tray>
      </Taskbar>
    </App_>
  );
}
